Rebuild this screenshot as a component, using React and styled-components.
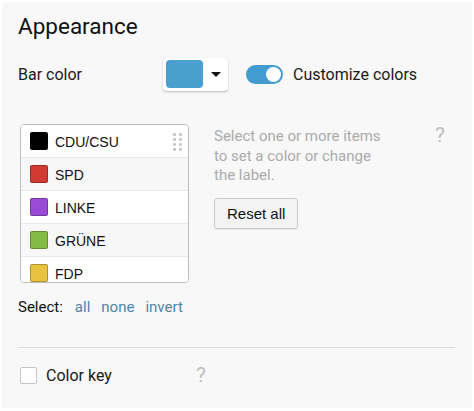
import React from "react";
import styled, { createGlobalStyle } from "styled-components";

const Global = createGlobalStyle`
  html, body { margin: 0; padding: 0; background: #ffffff; }
  body { font-family: Roboto, "Noto Sans", sans-serif; color: #1a1a1a; }
`;

const Panel = styled.div`
  margin: 2px;
  width: 470px;
  height: 406px;
  box-sizing: border-box;
  background: #f8f8f8;
  padding: 11px 16px 0 16px;
  display: flex;
  flex-direction: column;
`;

const Heading = styled.h2`
  margin: 0;
  font-size: 22.5px;
  font-weight: 400;
  line-height: 26px;
  color: #111;
`;

const Row = styled.div`
  display: flex;
  align-items: center;
  margin-top: ${(p) => p.$mt || 0}px;
`;

const Label = styled.span`
  font-size: 16px;
  color: #1a1a1a;
  width: ${(p) => (p.$w ? p.$w + "px" : "auto")};
  flex-shrink: 0;
`;

const ColorButton = styled.button`
  display: flex;
  align-items: center;
  gap: 8px;
  border: none;
  background: #fff;
  border-radius: 4px;
  padding: 2px 7px 3px 3px;
  box-shadow: 0 1px 2px rgba(0, 0, 0, 0.25);
  cursor: pointer;
`;

const Swatch = styled.span`
  display: block;
  width: 37px;
  height: 28px;
  border-radius: 4px;
  background: ${(p) => p.$c};
`;

const Caret = styled.span`
  display: block;
  width: 0;
  height: 0;
  border-left: 5px solid transparent;
  border-right: 5px solid transparent;
  border-top: 5px solid #111;
`;

const Toggle = styled.span`
  position: relative;
  display: block;
  width: 37px;
  height: 19px;
  border-radius: 10px;
  background: #439ccd;
  margin-left: 18px;
  margin-right: 10px;
  &::after {
    content: "";
    position: absolute;
    right: 2px;
    top: 2px;
    width: 15px;
    height: 15px;
    border-radius: 50%;
    background: #fff;
  }
`;

const Columns = styled.div`
  display: flex;
  margin-top: 33px;
`;

const ListBox = styled.div`
  width: 169px;
  height: 159px;
  box-sizing: border-box;
  border: 1px solid #bdbdbd;
  border-radius: 4px;
  overflow: hidden;
  background: #fff;
  margin-left: 2px;
  flex-shrink: 0;
`;

const Item = styled.div`
  position: relative;
  display: flex;
  align-items: center;
  height: 33px;
  box-sizing: border-box;
  padding-left: 9px;
  padding-top: 2px;
  background: ${(p) => (p.$alt ? "#f7f7f7" : "#fff")};
  border-bottom: 1px solid #e8e8e8;
  font-family: "Liberation Sans", Arial, sans-serif;
  font-size: 14px;
  color: #111;
`;

const ItemSwatch = styled.span`
  display: block;
  width: 16px;
  height: 16px;
  border-radius: 2px;
  background: ${(p) => p.$c};
  border: 1px solid rgba(0, 0, 0, 0.25);
  margin-right: 7px;
  margin-top: -2px;
`;

const Handle = styled.span`
  position: absolute;
  right: 6px;
  top: 8px;
  display: grid;
  grid-template-columns: 3px 3px;
  gap: 2px 3px;
  & > i {
    display: block;
    width: 3px;
    height: 3px;
    background: #c8c8c8;
    border-radius: 1px;
  }
`;

const Side = styled.div`
  flex: 1;
  display: flex;
  flex-direction: column;
  align-items: flex-start;
  padding-left: 25px;
  padding-top: 3px;
`;

const SideTop = styled.div`
  display: flex;
  width: 100%;
  justify-content: space-between;
  align-items: flex-start;
`;

const Help = styled.p`
  margin: 0;
  width: 172px;
  font-size: 15px;
  line-height: 19.5px;
  color: #ababab;
`;

const Question = styled.span`
  font-size: 21px;
  color: #bdbdbd;
  line-height: 22px;
  margin-top: ${(p) => p.$mt || 0}px;
  margin-right: ${(p) => p.$mr || 0}px;
`;

const ResetButton = styled.button`
  margin-top: 12px;
  height: 31px;
  padding: 0 12px;
  border: 1px solid #cccccc;
  border-radius: 3px;
  background: #f3f3f3;
  box-shadow: 0 1px 1px rgba(0, 0, 0, 0.08);
  font-family: "Liberation Sans", Arial, sans-serif;
  font-size: 15px;
  color: #111;
`;

const SelectRow = styled.div`
  display: flex;
  align-items: center;
  gap: 11px;
  margin-top: 15px;
  font-size: 15px;
`;

const SelLabel = styled.span`
  color: #111;
  margin-right: 1px;
`;

const LinkText = styled.a`
  color: #4e86a8;
  text-decoration: none;
`;

const Divider = styled.hr`
  border: none;
  border-top: 1px solid #dcdcdc;
  margin: 31px 0 0 0;
  width: 437px;
`;

const Check = styled.span`
  display: block;
  width: 15px;
  height: 15px;
  border: 1px solid #c6c6c6;
  border-radius: 2px;
  background: #fff;
  margin-left: 2px;
  margin-right: 9px;
  flex-shrink: 0;
`;

const items = [
  { name: "CDU/CSU", c: "#000000" },
  { name: "SPD", c: "#d13a32" },
  { name: "LINKE", c: "#9a4ad6" },
  { name: "GRÜNE", c: "#84bb45" },
  { name: "FDP", c: "#e8c33f" },
];

export default function App() {
  return (
    <>
      <Global />
      <Panel>
        <Heading>Appearance</Heading>
        <Row $mt={19}>
          <Label $w={145}>Bar color</Label>
          <ColorButton>
            <Swatch $c="#49a0cf" />
            <Caret />
          </ColorButton>
          <Toggle />
          <Label>Customize colors</Label>
        </Row>
        <Columns>
          <ListBox>
            {items.map((it, i) => (
              <Item key={it.name} $alt={i % 2 === 1}>
                <ItemSwatch $c={it.c} />
                {it.name}
                {i === 0 && (
                  <Handle>
                    <i /><i /><i /><i /><i /><i /><i /><i />
                  </Handle>
                )}
              </Item>
            ))}
          </ListBox>
          <Side>
            <SideTop>
              <Help>Select one or more items to set a color or change the label.</Help>
              <Question $mr={11} $mt={-3}>?</Question>
            </SideTop>
            <ResetButton>Reset all</ResetButton>
          </Side>
        </Columns>
        <SelectRow>
          <SelLabel>Select:</SelLabel>
          <LinkText href="#">all</LinkText>
          <LinkText href="#">none</LinkText>
          <LinkText href="#">invert</LinkText>
        </SelectRow>
        <Divider />
        <Row $mt={16}>
          <Check />
          <Label $w={150}>Color key</Label>
          <Question>?</Question>
        </Row>
      </Panel>
    </>
  );
}
